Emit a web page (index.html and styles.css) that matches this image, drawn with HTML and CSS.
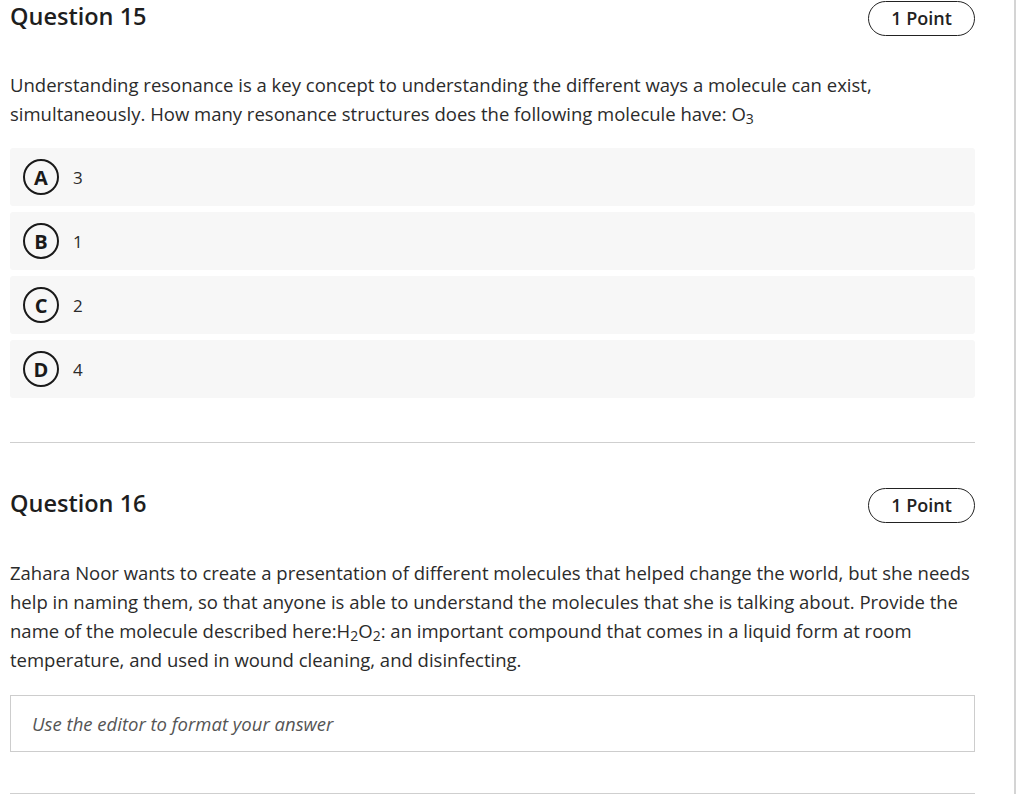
FILE: index.html
```html
<!DOCTYPE html>
<html lang="en">
<head>
<meta charset="utf-8">
<title>Quiz</title>
<link rel="stylesheet" href="styles.css">
</head>
<body>
<div class="page">
  <div class="content">
    <section class="question">
      <div class="q-header">
        <h2 class="q-title">Question 15</h2>
        <span class="points">1 Point</span>
      </div>
      <p class="prompt">Understanding resonance is a key concept to understanding the different ways a molecule can exist, simultaneously. How many resonance structures does the following molecule have: O<sub>3</sub></p>
      <div class="options">
        <div class="option"><span class="letter">A</span><span class="value">3</span></div>
        <div class="option"><span class="letter">B</span><span class="value">1</span></div>
        <div class="option"><span class="letter">C</span><span class="value">2</span></div>
        <div class="option"><span class="letter">D</span><span class="value">4</span></div>
      </div>
    </section>
    <hr class="divider first">
    <section class="question q16">
      <div class="q-header">
        <h2 class="q-title">Question 16</h2>
        <span class="points">1 Point</span>
      </div>
      <p class="prompt">Zahara Noor wants to create a presentation of different molecules that helped change the world, but she needs help in naming them, so that anyone is able to understand the molecules that she is talking about. Provide the name of the molecule described here:H<sub>2</sub>O<sub>2</sub>: an important compound that comes in a liquid form at room temperature, and used in wound cleaning, and disinfecting.</p>
      <div class="answer">Use the editor to format your answer</div>
    </section>
    <hr class="divider last">
  </div>
</div>
</body>
</html>
```

FILE: styles.css
```css
html, body {
  margin: 0;
  padding: 0;
  background: #ffffff;
}
body {
  font-family: "Open Sans", "Noto Sans", sans-serif;
  color: #262626;
}
.page {
  width: 1016px;
  min-height: 794px;
  border-right: 2px solid #d4d4d4;
  box-sizing: border-box;
}
.content {
  width: 965px;
  margin-left: 10px;
}
.q-header {
  display: flex;
  justify-content: space-between;
  align-items: center;
  height: 36px;
}
.q-title {
  margin: 0 0 4px;
  font-size: 23.5px;
  font-weight: 600;
  color: #1e1e1e;
}
.points {
  display: inline-flex;
  align-items: center;
  justify-content: center;
  box-sizing: border-box;
  width: 107px;
  height: 35px;
  border: 1px solid #222;
  border-radius: 18px;
  font-size: 18px;
  font-weight: 600;
  color: #222;
}
.prompt {
  margin: 34px 0 0;
  font-size: 18.5px;
  line-height: 29px;
  color: #2b2b2b;
}
.prompt sub {
  font-size: 14px;
  line-height: 0;
  vertical-align: -3px;
}
.options {
  display: flex;
  flex-direction: column;
  gap: 6px;
  margin-top: 20px;
}
.option {
  display: flex;
  align-items: center;
  height: 58px;
  background: #f7f7f7;
  border-radius: 3px;
  padding-left: 13px;
}
.letter {
  display: inline-flex;
  align-items: center;
  justify-content: center;
  box-sizing: border-box;
  width: 36px;
  height: 36px;
  border: 2px solid #1a1a1a;
  border-radius: 50%;
  font-size: 20px;
  font-weight: 700;
  color: #1a1a1a;
}
.value {
  margin-left: 14px;
  font-size: 17px;
  color: #2b2b2b;
}
.divider {
  border: 0;
  border-top: 1px solid #cfcfcf;
  margin: 0;
}
.divider.first {
  margin-top: 44px;
}
.q16 {
  margin-top: 44px;
}
.q16 .prompt {
  margin-top: 35px;
}
.answer {
  margin-top: 21px;
  height: 57px;
  box-sizing: border-box;
  border: 1px solid #cdcdcd;
  padding-left: 21px;
  display: flex;
  align-items: center;
  font-size: 18.5px;
  font-style: italic;
  color: #555;
}
.divider.last {
  margin-top: 41px;
}
```
